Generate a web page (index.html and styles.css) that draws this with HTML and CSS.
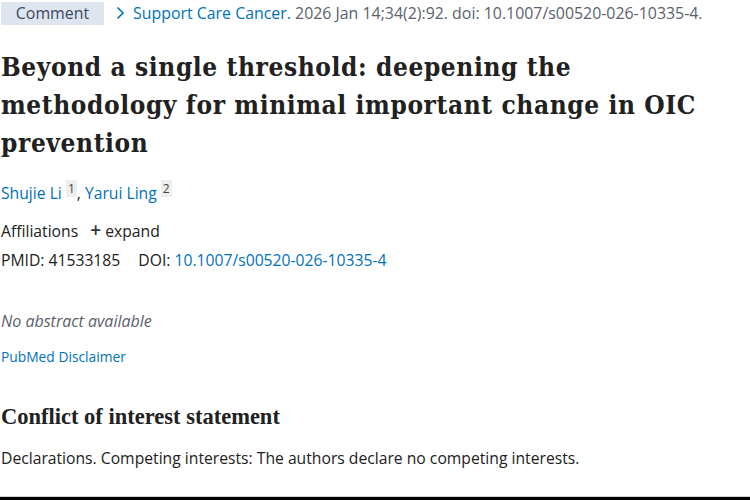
FILE: index.html
```html
<!DOCTYPE html>
<html>
<head>
<meta charset="utf-8">
<link rel="stylesheet" href="styles.css">
</head>
<body>
<div class="page">
  <div class="topline">
    <span class="pill">Comment</span>
    <span class="cite"><svg class="chev" width="9" height="14" viewBox="0 0 9 14"><path d="M1.5 1.5 L7 7 L1.5 12.5" fill="none" stroke="#0071bc" stroke-width="1.6"/></svg><a class="journal" href="#">Support Care Cancer.</a> 2026 Jan 14;34(2):92. doi: 10.1007/s00520-026-10335-4.</span>
  </div>
  <h1 class="title">Beyond a single threshold: deepening the methodology for minimal important change in OIC prevention</h1>
  <div class="authors"><a href="#">Shujie Li</a> <sup class="aff">1</sup>, <a href="#">Yarui Ling</a> <sup class="aff">2</sup></div>
  <div class="affs">Affiliations <span class="expand"><span class="plus">+</span> expand</span></div>
  <div class="ids">PMID: 41533185 <span class="doi">DOI: <a href="#">10.1007/s00520-026-10335-4</a></span></div>
  <div class="noabs">No abstract available</div>
  <div class="disc"><a href="#">PubMed Disclaimer</a></div>
  <h2 class="coi">Conflict of interest statement</h2>
  <p class="coitext">Declarations. Competing interests: The authors declare no competing interests.</p>
</div>
<div class="bottombar"></div>
</body>
</html>
```
FILE: styles.css
```css
html, body { margin: 0; padding: 0; background: #fff; }
body { font-family: "Open Sans", "Noto Sans", sans-serif; color: #212121; width: 750px; height: 500px; overflow: hidden; display: flex; flex-direction: column; }
a { color: #0071bc; text-decoration: none; }
.page { flex: 1; padding-left: 1px; }
.topline { display: flex; align-items: center; height: 25px; font-size: 15.9px; }
.pill { background: #dfe5ee; color: #3a4a5e; height: 23px; width: 103px; margin-top: 1px; display: flex; align-items: center; justify-content: center; box-sizing: border-box; }
.cite { margin-left: 12px; color: #5b616b; }
.chev { margin-right: 8px; vertical-align: -1px; }
.title { font-family: "DejaVu Serif Condensed", "DejaVu Serif", serif; font-weight: bold; font-size: 26px; letter-spacing: 0.6px; line-height: 38px; margin: 23px 0 0 0; color: #212121; }
.authors { font-size: 15.7px; margin-top: 17px; line-height: 20px; }
.aff { font-size: 12px; background: #eeeeee; color: #444; padding: 0 2px; vertical-align: 6px; }
.affs { font-size: 15.7px; margin-top: 17px; line-height: 20px; }
.expand { margin-left: 8px; }
.plus { font-size: 19px; font-weight: 600; color: #333; }
.ids { font-size: 15.7px; margin-top: 9px; line-height: 20px; }
.doi { margin-left: 14px; }
.noabs { font-style: italic; color: #5b616b; font-size: 16px; margin-top: 41px; line-height: 20px; }
.disc { font-size: 13.8px; margin-top: 17px; line-height: 18px; }
.coi { font-family: "Liberation Serif", serif; font-weight: bold; font-size: 22.5px; margin: 37px 0 0 0; line-height: 28px; color: #212121; }
.coitext { font-size: 15.7px; margin: 17px 0 0 0; line-height: 20px; }
.bottombar { height: 3px; background: #000; border-top: 1px solid #d0d0d0; flex: none; }
```
